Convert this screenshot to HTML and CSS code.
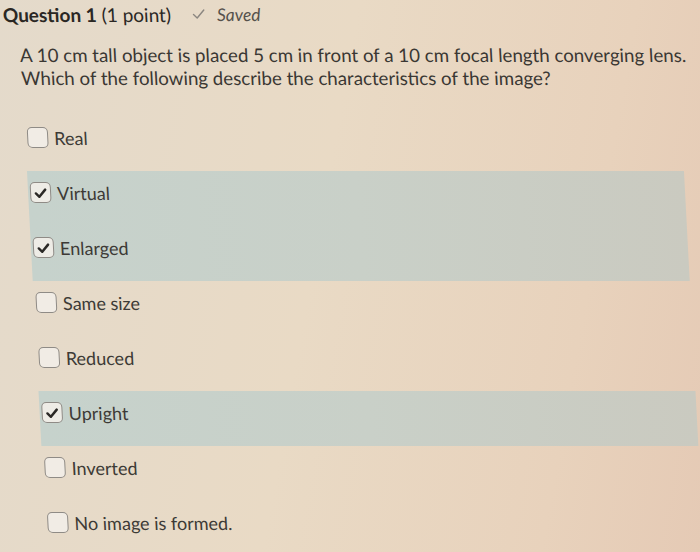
FILE: index.html
```html
<!doctype html>
<html>
<head>
    <meta charset="utf-8">
    <link rel="stylesheet" href="styles.css">
</head>
<body>
    <div class="page">
        <div class="qhead">
            <span class="qtitle"><b>Question 1</b> (1 point)</span>
            <span class="saved">
                <svg class="savedicon" viewBox="0 0 16 16" width="14" height="14">
                    <path d="M2 8.5 L6 12.5 L14 3.5" fill="none" stroke="#8b8680" stroke-width="1.6" stroke-linecap="round" stroke-linejoin="round"/>
                </svg>
                Saved
            </span>
        </div>

        <p class="qtext">A 10 cm tall object is placed 5 cm in front of a 10 cm focal length converging lens. Which of the following describe the characteristics of the image?</p>

        <div class="options">
            <div class="opt">
                <span class="box"></span>
                <span class="label">Real</span>
            </div>
            <div class="opt picked">
                <span class="box"><svg viewBox="0 0 20 20" width="20" height="20"><path d="M5 10.5 L8.5 14 L15 6.5" fill="none" stroke="#2b2926" stroke-width="2.6" stroke-linecap="round" stroke-linejoin="round"/></svg></span>
                <span class="label">Virtual</span>
            </div>
            <div class="opt picked">
                <span class="box"><svg viewBox="0 0 20 20" width="20" height="20"><path d="M5 10.5 L8.5 14 L15 6.5" fill="none" stroke="#2b2926" stroke-width="2.6" stroke-linecap="round" stroke-linejoin="round"/></svg></span>
                <span class="label">Enlarged</span>
            </div>
            <div class="opt">
                <span class="box"></span>
                <span class="label">Same size</span>
            </div>
            <div class="opt">
                <span class="box"></span>
                <span class="label">Reduced</span>
            </div>
            <div class="opt picked">
                <span class="box"><svg viewBox="0 0 20 20" width="20" height="20"><path d="M5 10.5 L8.5 14 L15 6.5" fill="none" stroke="#2b2926" stroke-width="2.6" stroke-linecap="round" stroke-linejoin="round"/></svg></span>
                <span class="label">Upright</span>
            </div>
            <div class="opt">
                <span class="box"></span>
                <span class="label">Inverted</span>
            </div>
            <div class="opt">
                <span class="box"></span>
                <span class="label">No image is formed.</span>
            </div>
        </div>
    </div>
</body>
</html>
```

FILE: styles.css
```css
html, body {
    margin: 0;
    height: 100%;
}

body {
    background: linear-gradient(100deg, #e4dacb 0%, #e9dac5 45%, #e8d2bc 80%, #e5cab5 100%);
    font-family: 'Lato', 'Open Sans', sans-serif;
    color: #3a3733;
    overflow: hidden;
}

/* the screen was photographed at a slight angle */
.page {
    transform: skewX(3deg);
    transform-origin: 0 0;
}

.qhead {
    display: flex;
    align-items: center;
    height: 28px;
    padding-left: 2px;
}

.qtitle {
    font-size: 19px;
    color: #2a2724;
}

.qtitle b {
    font-weight: 700;
}

.saved {
    display: flex;
    align-items: center;
    gap: 11px;
    margin-left: 21px;
    font-size: 17.5px;
    font-style: italic;
    color: #55514c;
}

.qtext {
    margin: 16px 0 0 17px;
    width: 682px;
    font-size: 18.7px;
    line-height: 23px;
}

.options {
    margin-top: 26px;
    width: 657px;
    margin-left: 18px;
}

.opt {
    display: flex;
    align-items: flex-start;
    gap: 6px;
    height: 55px;
    box-sizing: border-box;
    padding: 11px 0 0 2px;
}

.opt.picked {
    background: linear-gradient(90deg, #c6d2cc 0%, #c9d0c8 50%, #cacac0 100%);
}

.box {
    display: flex;
    align-items: center;
    justify-content: center;
    width: 19px;
    height: 19px;
    border: 1.5px solid #8f8b86;
    border-radius: 5px;
    background: #f1ece5;
}

.picked .box {
    background: #eeece6;
}

.label {
    font-size: 18px;
    line-height: 22px;
    color: #3d3a36;
}
```
